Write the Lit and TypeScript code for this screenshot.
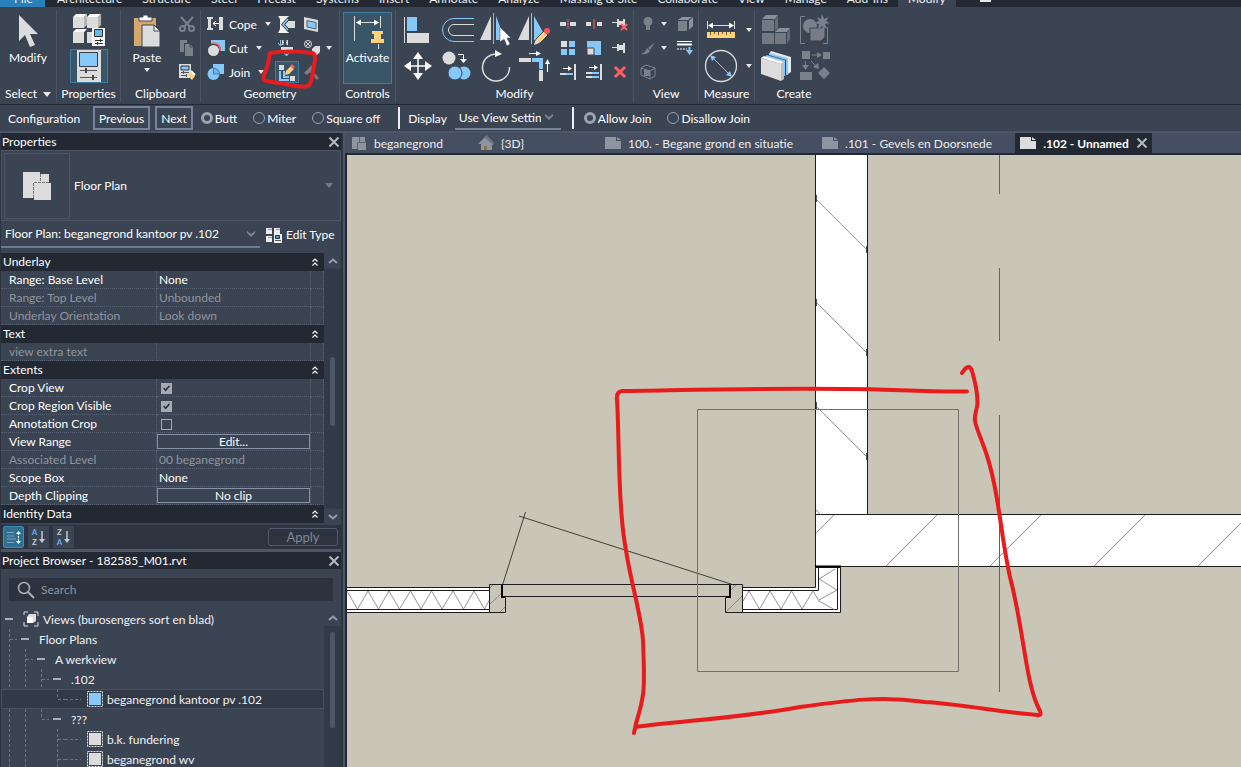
import { LitElement, html, svg, css, nothing, TemplateResult, SVGTemplateResult } from "lit";
import { customElement } from "lit/decorators.js";
import { classMap } from "lit/directives/class-map.js";

const LIGHT = "#dcdcdc";
const BLUE = "#86c8fa";
const DIM = "#7b818b";
const YELLOW = "#ffd27a";
const RED = "#ff5f5f";

const icon = (w: number, h: number, body: SVGTemplateResult) =>
  html`<svg width=${w} height=${h} viewBox="0 0 ${w} ${h}" aria-hidden="true">${body}</svg>`;

const caret = html`<svg class="caret" width="6" height="4" viewBox="0 0 6 4" aria-hidden="true"><path d="M0 0h6L3 4z" fill="#e8e8e8"/></svg>`;
const chevron = html`<svg class="chevron" width="8" height="6" viewBox="0 0 8 6" aria-hidden="true"><path d="M0 0L4 3L8 0V2L4 6L0 2z" fill="#7a8699"/></svg>`;
const cross = html`<svg width="12" height="12" viewBox="0 0 12 12" aria-hidden="true"><path d="M1.500 1.500l9 9M10.500 1.500l-9 9" stroke="#b4b9c1" stroke-width="2"/></svg>`;
const scrollArrow = (up: boolean) =>
  icon(10, 6, svg`<path d=${up ? "M1 5l4-3.500l4 3.500" : "M1 1l4 3.500l4-3.500"} fill="none" stroke="#979da7" stroke-width="2"/>`);

const I = {
  cursor: icon(24, 36, svg`<path d="M3 1V27L9 21L14 33L19 31L14 20H22z" fill=${LIGHT}/>`),
  typeProps: icon(36, 36, svg`
    <g fill=${LIGHT}><path d="M2 5h11v11H2zM16 5h11v11H16zM2 20h11v11H2zM16 20h8v11h-8z"/></g>
    <g fill="#fff"><path d="M2 5l3-3h11l-3 3zM16 5l3-3h11l-3 3zM2 20l3-3h11l-3 3z"/></g>
    <g fill="#b4b4b4"><path d="M13 5l3-3v11l-3 3zM27 5l3-3v11l-3 3z"/></g>
    <path d="M21 16h13v18H21z" fill="#f5f5f5"/><path d="M23.500 17.500h8v7h-8z" fill="#62b8f5" stroke="#333"/>
    <path d="M24 28.500h8M24 31.500h8M29.500 27v3M26.500 30v3" stroke="#333"/>`),
  props: icon(24, 32, svg`<path d="M0 0h24v32H0z" fill=${LIGHT}/><path d="M2.500 2.500h18v14h-18z" fill=${BLUE} stroke="#33404d" stroke-width="1"/>
    <path d="M3 20.500h17M3 27.500h17" stroke="#555"/><path d="M8 18h2v5H8zM15 25h2v5h-2z" fill="#444"/>`),
  paste: icon(28, 34, svg`<path d="M1 4h22v28H1z" fill="#d6a76c"/><path d="M6 3h4V1h5v2h4v4H6z" fill="#fff" stroke="#3b4453"/>
    <path d="M9 11h12l6 6v16H9z" fill=${LIGHT} stroke="#3b4453"/><path d="M21 11v6h6z" fill="#fff" stroke="#3b4453"/>`),
  cut: icon(16, 16, svg`<g fill="none" stroke=${DIM} stroke-width="2"><path d="M2 1l9 10M14 1L5 11"/><circle cx="3.500" cy="12.500" r="2.500"/><circle cx="12.500" cy="12.500" r="2.500"/></g>`),
  copySmall: icon(16, 16, svg`<path d="M1 0h7v3H5v9H1z" fill=${DIM}/><path d="M6 4h5l3 3v9H6z" fill=${DIM}/><path d="M11 4v3h3" fill="none" stroke="#3b4453"/>`),
  match: icon(18, 16, svg`<path d="M1 0h12v14H1z" fill=${LIGHT}/><path d="M3 2h8v4H3z" fill=${BLUE} stroke="#333"/><path d="M3 8.500h8M3 11.500h6M5.500 7v3M8.500 10v3" stroke="#555"/>
    <path d="M10 12l4-4l3 4l-3 4z" fill=${YELLOW}/><path d="M13 7l4 4" stroke="#fff" stroke-width="2"/>`),
  cope: icon(18, 14, svg`<path d="M0 0h6v2H4v9h2v2H0v-2h1V2H0zM12 0h4v13h-4z" fill=${LIGHT}/><path d="M12 6.500H6M9 4L6 6.500L9 9" fill="none" stroke="#fff"/>`),
  cutGeo: icon(18, 18, svg`<path d="M4 1h14v11H4z" fill=${BLUE}/><circle cx="7" cy="11" r="7" fill="#3b4453"/><circle cx="6.500" cy="11.500" r="5.500" fill=${LIGHT}/><path d="M5 4Q14 4 13 12" fill="none" stroke=${RED} stroke-width="1.500"/>`),
  join: icon(18, 18, svg`<path d="M6 1h11v10H6z" fill=${BLUE}/><circle cx="6.500" cy="11" r="6" fill=${BLUE}/><path d="M6.500 5A6 6 0 0 1 12.500 11H6.500z" fill="#6fb5ea" stroke="#3b7fb4"/>`),
  coping: icon(17, 17, svg`<path d="M0 0h11L5 8.500L11 17H0L2 13V3z" fill="#f0f0f0"/><path d="M10 5h7v7h-7L7 8.500z" fill=${LIGHT}/><path d="M11 2L5 8.500l6 6.500" fill="none" stroke="#2f3845" stroke-width="3"/><path d="M10 3L5 8.500L10 14" fill="none" stroke=${BLUE} stroke-width="1.500"/>`),
  face: icon(17, 17, svg`<path d="M1 1l14 3v12L1 13z" fill=${LIGHT}/><path d="M4 4.500l9 2v6.500L4 11z" fill=${BLUE} stroke="#55606f"/>`),
  beam: icon(17, 16, svg`<path d="M4 0h2v5H4zM8 0h2v5H8zM3 7h12v3H3z" fill=${LIGHT}/><path d="M5 1h4M5 4h4" stroke="#3b4453"/><path d="M2.500 0v5M0 3l2.500 3L5 3M8.500 10v5M6 13l2.500 3L11 13" stroke=${BLUE} fill="none"/>`),
  wallOpen: icon(17, 16, svg`<circle cx="5" cy="4" r="3.500" fill="none" stroke=${LIGHT}/><path d="M2.500 1.500l5 5M7.500 1.500l-5 5" stroke=${LIGHT}/><path d="M9 9l3-3h5v6l-3 3H9z" fill=${LIGHT}/>`),
  wallJoin: icon(22, 20, svg`<path d="M3 3h5v5H3z" fill=${LIGHT}/><path d="M14 14h5v5h-5z" fill=${LIGHT}/><path d="M3 9h2v8h8v2H3zM7 9h2v5h4v2H7z" fill=${BLUE}/>
    <path d="M10 9l5-5l3 3l-5 5l-4 1z" fill=${YELLOW}/><path d="M14 4l2-2l3 3l-2 2z" fill=${RED}/>`),
  hammer: icon(17, 17, svg`<path d="M1 9l8-8l2 3L4 11z" fill=${DIM}/><path d="M7 6l8 9" stroke="#8f6e69" stroke-width="3"/>`),
  activate: icon(32, 36, svg`<path d="M2.500 2v25M28.500 2v12M4 8.500h23" stroke=${LIGHT}/><path d="M4 8.500l5-3v6zM27 8.500l-5-3v6z" fill="#fff"/>
    <path d="M20 17h11v3h-2v5h3v4H19v-4h3v-5h-2z" fill=${YELLOW}/><path d="M26.500 30v5" stroke=${LIGHT}/>`),
  align: icon(30, 30, svg`<path d="M1.500 2v26" stroke=${LIGHT}/><path d="M4 2h10v14H4z" fill=${BLUE}/><path d="M4 18h22v10H4z" fill=${LIGHT}/>`),
  offset: icon(34, 28, svg`<path d="M33 2.500H13a11 11 0 0 0 0 23H33" fill="none" stroke=${BLUE}/><path d="M33 8.500H13a5.500 5.500 0 0 0 0 11H33" fill="none" stroke=${LIGHT}/>`),
  mirrorPick: icon(34, 34, svg`<path d="M1 27L12 3v24z" fill=${LIGHT}/><path d="M14.500 0v31" stroke="#5fe07f"/><path d="M17 3v24h9z" fill=${BLUE}/><path d="M21 14v15l4-3l3 7l3-2l-3-6h4z" fill="#fff" stroke="#3b4453" stroke-width=".5"/>`),
  mirrorDraw: icon(34, 34, svg`<path d="M1 27L12 3v24z" fill=${LIGHT}/><path d="M14.500 0v31" stroke=${BLUE}/><path d="M17 3v24h9l1-6z" fill=${BLUE}/><path d="M17 32l2-6L27 18l4 4l-8 8z" fill=${YELLOW} stroke="#3b4453"/><path d="M17 32l2-6l3 4z" fill="#ddd"/><circle cx="30" cy="18" r="3" fill="#ff5357"/>`),
  move: icon(30, 30, svg`<path d="M15 4v22M4 15h22" stroke="#fff" stroke-width="1.500"/><path d="M15 1l5 7H10zM15 29l5-7H10zM1 15l7-5v10zM29 15l-7-5v10z" fill="#fff"/>`),
  copy: icon(32, 32, svg`<circle cx="8" cy="8" r="6.500" fill=${LIGHT}/><circle cx="23" cy="23" r="6.500" fill=${BLUE}/><circle cx="14" cy="23" r="7" fill=${BLUE} stroke="#3b4453"/><path d="M17 4.500h5.500V10" fill="none" stroke="#fff"/><path d="M19 9h7l-3.500 4z" fill="#fff"/>`),
  rotate: icon(34, 32, svg`<path d="M19 4.200A13.500 13.500 0 1 0 30.500 17" fill="none" stroke=${LIGHT} stroke-width="1.500"/><path d="M16 0l7 4l-7 3z" fill="#fff"/>`),
  trim: icon(36, 32, svg`<path d="M2 8h12v4H2z" fill=${LIGHT}/><path d="M15 8h11v11h-4v-7h-7z" fill=${BLUE}/><path d="M22 20h4v11h-4z" fill=${LIGHT}/><path d="M12 3.500h8M30.500 22v-8" stroke="#fff"/><path d="M19 1l5 2.500L19 6zM28 14l2.500-5l2.500 5z" fill="#fff"/>`),
  split: icon(16, 10, svg`<path d="M0 3h6v4H0zM10 3h6v4h-6z" fill=${LIGHT}/><path d="M8 0v10" stroke=${RED}/>`),
  splitGap: icon(16, 10, svg`<path d="M0 3h5v4H0zM11 3h5v4h-5z" fill=${LIGHT}/><path d="M8 0v10" stroke=${RED}/>`),
  unpin: icon(16, 14, svg`<path d="M0 5.500h5" stroke=${LIGHT}/><path d="M5 2h2v2h4V2h2v8h-2V8H7v2H5z" fill=${LIGHT}/><path d="M9 7l6 6M15 7l-6 6" stroke=${RED} stroke-width="2"/>`),
  array: icon(16, 16, svg`<path d="M1 1h6v6H1z" fill=${LIGHT}/><path d="M9 1h6v6H9zM1 9h6v6H1zM9 9h6v6H9z" fill=${BLUE}/>`),
  scale: icon(16, 16, svg`<path d="M1 1h14v14H1z" fill=${BLUE}/><path d="M1 8h7v7H1z" fill=${LIGHT} stroke="#3b4453"/>`),
  pin: icon(16, 12, svg`<path d="M0 5.500h5" stroke=${LIGHT}/><path d="M5 2h2v1h4V1h2v10h-2V8H7v1H5z" fill=${LIGHT}/>`),
  extend: icon(18, 16, svg`<path d="M1 9h6v2H1z" fill=${LIGHT}/><path d="M7 9h7v2H7z" fill=${BLUE}/><path d="M15 0h2v16h-2z" fill=${LIGHT}/><path d="M4 4.500h6" stroke="#fff"/><path d="M9 2l4 2.500L9 7z" fill="#fff"/>`),
  extendMulti: icon(18, 16, svg`<path d="M1 8h6v2H1zM1 12h6v2H1z" fill=${LIGHT}/><path d="M7 8h7v2H7zM7 12h7v2H7z" fill=${BLUE}/><path d="M15 0h2v16h-2z" fill=${LIGHT}/><path d="M4 3.500h6" stroke="#fff"/><path d="M9 1l4 2.500L9 6z" fill="#fff"/>`),
  del: icon(14, 14, svg`<path d="M2 2l10 10M12 2L2 12" stroke=${RED} stroke-width="3"/>`),
  bulb: icon(16, 16, svg`<circle cx="8" cy="5.500" r="4.500" fill=${DIM}/><path d="M6 9h4v5H6z" fill=${DIM}/>`),
  box: icon(16, 16, svg`<path d="M1 5h9v10H1z" fill=${DIM}/><path d="M1 4l4-3h10l-4 3zM12 5l4-4v9l-4 4z" fill="#8d939d"/>`),
  brush: icon(16, 14, svg`<path d="M15 1L8 7l2 2z" fill=${DIM}/><path d="M7 7l3 3Q7 14 1 13Q5 12 7 7z" fill=${DIM}/>`),
  linework: icon(18, 16, svg`<path d="M1 1.500h15" stroke="#fff"/><path d="M1 4.500h15" stroke="#fff" stroke-width="2"/><path d="M1 9h10" stroke="#fff" stroke-dasharray="2 1"/><path d="M13.500 7v5" stroke=${BLUE} stroke-width="2"/><path d="M10 10h7l-3.500 5z" fill=${BLUE}/>`),
  wire: icon(16, 16, svg`<path d="M1 4l5-3l9 3v8l-5 3l-9-4zM1 4l9 3v8M10 7l5-3" fill="none" stroke=${DIM}/><path d="M4 6h6v6H4z" fill=${DIM}/>`),
  dimension: icon(30, 20, svg`<path d="M1.500 1v8M28.500 1v8M3 5.500h24" stroke=${LIGHT}/><path d="M2 5.500l5-3v6zM28 5.500l-5-3v6z" fill="#fff"/><path d="M1 12h28v6H1z" fill=${YELLOW}/><path d="M4.500 12v3M8.500 12v2M12.500 12v3M16.500 12v2M20.500 12v3M24.500 12v2" stroke="#6c5a38"/>`),
  measure: icon(34, 34, svg`<circle cx="17" cy="17" r="15.500" fill="none" stroke=${LIGHT} stroke-width="1.300"/><path d="M8 8l18 18" stroke=${BLUE}/><path d="M6 6l6 2l-4 4zM28 28l-6-2l4-4z" fill=${BLUE}/>`),
  blocks: icon(30, 30, svg`<g fill="#737983"><path d="M1 5h12v11H1zM1 18h12v11H1zM14 18h11v11H14z"/></g><g fill="#898f99"><path d="M1 4l4-4h12l-3 4zM14 17l4-4h11l-3 4z"/></g><path d="M14 5l3-4v12l-3 3zM26 18l3-4v10l-3 5z" fill="#666c76"/>`),
  group: icon(32, 32, svg`<path d="M6 2.500H1.500v27H6M24 29.500h4.500V13" fill="none" stroke=${DIM}/><circle cx="11" cy="12" r="7" fill=${DIM}/><path d="M11 14h11l4-3v12l-4 4H11z" fill="#777d87" stroke="#3b4453"/><path d="M23 0l2 5l5-2l-3 4l4 2l-5 1l2 5l-5-3l-4 4l1-6l-5-1l5-2l-2-4l4 2z" fill=${DIM}/>`),
  assembly: icon(32, 32, svg`<path d="M9 4l2-3l20 6v15l-3 2V10z" fill="#e8e8e8"/><path d="M6 6l18 5v15M9 4l18 5v16" fill="none" stroke=${BLUE} stroke-width="2"/><path d="M1 8l20 6v17L1 24z" fill=${LIGHT}/><path d="M1 8l3-2l20 6l-3 2z" fill="#fff"/><path d="M21 14l3-2v17l-3 2z" fill="#bdbdbd"/>`),
  similar: icon(32, 32, svg`<path d="M3 1h8v8H3zM24 2h7v7h-7zM1 22h12v8H1zM25 17l6 6l-6 6l-6-6z" fill=${DIM}/><path d="M13 5h6M6.500 11v6M12 11l6 6" stroke=${DIM}/><path d="M18 2l5 3l-5 3zM3 15h7l-3.500 5zM20 19l-1-6l-5 4z" fill=${DIM}/>`),
  planThumb: icon(30, 30, svg`<path d="M1 1h17v26H1z" fill=${LIGHT}/><path d="M18 3h9v9h-9z" fill=${LIGHT}/><path d="M12 12h17v17H12z" fill=${LIGHT}/><path d="M18.500 3v8M27 11.500H11.500V28" fill="none" stroke="#777" stroke-dasharray="3 1"/>`),
  editType: icon(18, 16, svg`<path d="M1 1h6v6H1zM9 1h6v6H9zM1 9h6v6H1z" fill="#eee"/><path d="M3 2.500h4M11 2.500h4M3 10.500h4" stroke="#999"/><path d="M9 7h8v9H9z" fill="#eee"/><path d="M10.500 8.500h4v3h-4z" fill="#3f9be0" stroke="#333"/><path d="M10 13.500h6" stroke="#555"/>`),
  tabPlan: icon(16, 14, svg`<path d="M1 1h7v12H1zM9 1h5v5H9zM7 6h8v8H7z" fill="#8e95a1"/><path d="M8.500 1v5M6.500 13V6.500h8" fill="none" stroke="#5a6475"/>`),
  tabHome: icon(16, 16, svg`<path d="M0 9l7-7l9 7l-2 1v5H3V9z" fill="#8e95a1"/><path d="M6 2l3-2l7 8l-2 1z" fill="#6b7483"/><path d="M6 11h3v4H6z" fill="#8b7443"/>`),
  sheet: (c: string) => icon(16, 12, svg`<path d="M0 0h11v4h5v8H0z" fill=${c}/><path d="M12 0l4 3h-4z" fill=${c}/>`),
  views: icon(16, 16, svg`<path d="M1 4V1h4M11 1h4v4M15 11v4h-4M5 15H1v-4" fill="none" stroke=${LIGHT}/><path d="M4 6h6v6H4z" fill="#fff"/><path d="M4 6l2-3h7v7l-3 2V6z" fill=${LIGHT}/>`),
  leaf: (c: string) => icon(16, 16, svg`<path d="M.5 .5h15v15H.5z" fill="none" stroke="#e8e8e8" stroke-dasharray="2 1"/><path d="M2 2h12v12H2z" fill=${c}/>`),
  search: icon(18, 18, svg`<circle cx="7" cy="7" r="5.500" fill="none" stroke="#a9afb8" stroke-width="1.500"/><path d="M11 11l6 6" stroke="#a9afb8" stroke-width="2"/>`),
  double: icon(8, 8, svg`<path d="M1.500 3.500L4 1l2.500 2.500M1.500 7.500L4 5l2.500 2.500" fill="none" stroke="#fff" stroke-width="1.200"/>`),
  sortCat: icon(16, 16, svg`<path d="M1 3.500h7M1 7h7M1 10h9M1 13.500h7" stroke="#7ea5bd"/><path d="M12.500 4v8" stroke="#fff" stroke-dasharray="2 1"/><path d="M10 5l2.500-3L15 5zM10 12l2.500 3L15 12z" fill="#fff"/>`),
  sortArrow: icon(6, 14, svg`<path d="M3 1v10" stroke="#c6cad0" stroke-width="1.500"/><path d="M0 9h6l-3 4z" fill="#c6cad0"/>`),
};

const RIBBON_TABS = ["Architecture", "Structure", "Steel", "Precast", "Systems", "Insert", "Annotate", "Analyze", "Massing & Site", "Collaborate", "View", "Manage", "Add-Ins"];

type Prop = { name: string; value?: string; kind?: "check" | "button" | "text"; on?: boolean; dim?: boolean };
const SECTIONS: { title: string; rows: Prop[] }[] = [
  { title: "Underlay", rows: [
    { name: "Range: Base Level", value: "None" },
    { name: "Range: Top Level", value: "Unbounded", dim: true },
    { name: "Underlay Orientation", value: "Look down", dim: true },
  ] },
  { title: "Text", rows: [{ name: "view extra text", dim: true }] },
  { title: "Extents", rows: [
    { name: "Crop View", kind: "check", on: true },
    { name: "Crop Region Visible", kind: "check", on: true },
    { name: "Annotation Crop", kind: "check" },
    { name: "View Range", kind: "button", value: "Edit..." },
    { name: "Associated Level", value: "00 beganegrond", dim: true },
    { name: "Scope Box", value: "None" },
    { name: "Depth Clipping", kind: "button", value: "No clip" },
  ] },
  { title: "Identity Data", rows: [] },
];

/* guides: v = vertical, t = tee, l = corner, h = horizontal, space = empty */
type Node = { guides: string; toggle?: boolean; pic?: TemplateResult; label: string; selected?: boolean };
const TREE: Node[] = [
  { guides: "", toggle: true, pic: I.views, label: "Views (burosengers sort en blad)" },
  { guides: "t", toggle: true, label: "Floor Plans" },
  { guides: "vt", toggle: true, label: "A werkview" },
  { guides: "vvt", toggle: true, label: ".102" },
  { guides: "   lh", pic: I.leaf(BLUE), label: "beganegrond kantoor pv .102", selected: true },
  { guides: "vvl", toggle: true, label: "???" },
  { guides: "vv th", pic: I.leaf(LIGHT), label: "b.k. fundering" },
  { guides: "vv th", pic: I.leaf(LIGHT), label: "beganegrond wv" },
];
const GUIDE: Record<string, string> = {
  v: "M8.500 0v20", t: "M8.500 0v20M9 10.500h7", l: "M8.500 0v10M9 10.500h7", h: "M0 10.500h16", " ": "",
};

const base = css`
  * { box-sizing: border-box; }
  svg { display: block; flex: none; }
  button, select, input { font: inherit; color: inherit; background: none; border: 0; padding: 0; margin: 0; border-radius: 0; appearance: none; outline: none; }
`;

@customElement("ribbon-bar")
class RibbonBar extends LitElement {
  static styles = [base, css`
    :host { display: block; background: #3b4453; }
    .tabs { display: flex; align-items: flex-end; height: 7px; overflow: hidden; background: #222933; white-space: nowrap; }
    .tab { padding: 0 10px; line-height: 16px; color: #eceef0; text-decoration: none; }
    .file { width: 45px; padding: 0 14px; margin-right: 2px; background: #2a80b9; }
    .on { background: #3b4453; }
    .more { width: 11px; height: 2px; margin: 0 24px 5px; background: #e8e8e8; }
    .groups { display: flex; padding: 3px 0 2px; border-bottom: 1px solid #222933; }
    .group { position: relative; padding-top: 2px; border-right: 1px solid #4a5464; }
    .group:last-child { border-right: 0; }
    .body { display: grid; grid-auto-rows: 24px; height: 72px; align-items: center; justify-items: center; }
    .name { margin: 2px 0 0; font-size: 12px; font-weight: 400; line-height: 16px; text-align: center; display: flex; justify-content: center; align-items: center; gap: 6px; white-space: nowrap; }
    button { display: flex; align-items: center; justify-content: center; gap: 4px; }
    .big { flex-direction: column; justify-content: flex-start; grid-row: span 3; align-self: stretch; line-height: 16px; padding-top: 2px; gap: 2px; }
    .b-select { grid-template-columns: 56px; }
    .b-select .big { gap: 0; }
    .b-properties { grid-template-columns: 63px; grid-auto-rows: 36px; }
    .lit { background: #3a5468; border: 1px solid #3c7ea3; }
    .b-properties .lit { width: 38px; height: 34px; }
    .b-clipboard { grid-template-columns: 52px 27px; grid-auto-flow: column; grid-template-rows: repeat(3, 24px); }
    .b-geometry { grid-template-columns: 72px 28px 38px; }
    .b-geometry button { justify-self: start; }
    .b-geometry .c1 { padding-left: 6px; }
    .b-geometry .c1 .caret { margin-left: 4px; }
    .b-geometry .c2 { padding-left: 5px; }
    .b-geometry .c3 { padding-left: 2px; }
    .b-geometry .c3 .caret { margin-left: 2px; }
    .b-geometry .lit { width: 24px; height: 22px; margin-left: 2px; }
    .b-controls { grid-template-columns: 55px; }
    .b-controls .lit { width: 49px; padding-top: 1px; gap: 0; }
    .b-modify { grid-template-columns: repeat(4, 38px) repeat(3, 26px); grid-template-rows: repeat(6, 12px); padding-left: 7px; }
    .b-modify .tall { grid-row: span 3; justify-self: start; }
    .b-modify .small { grid-row: span 2; }
    .b-view { grid-template-columns: 38px 26px; }
    .b-view .c1 { justify-self: start; padding-left: 6px; gap: 5px; }
    .b-measure { grid-template-columns: 55px; grid-auto-rows: 36px; }
    .b-measure .measure { width: 50px; justify-content: space-between; }
    .b-measure .measure svg:first-child { width: 38px; }
    .b-create { grid-template-columns: 41px 37px; grid-auto-rows: 36px; }
    .mark { position: absolute; left: 58px; top: 38px; overflow: visible; pointer-events: none; }
  `];

  btn(label: string, cls: string, content: unknown) {
    return html`<button class=${cls} aria-label=${label}>${content}</button>`;
  }

  group(id: string, name: unknown, content: unknown, extra: unknown = nothing) {
    return html`<section class="group"><div class="body b-${id}">${content}</div><h2 class="name">${name}</h2>${extra}</section>`;
  }

  render() {
    const b = this.btn;
    return html`
      <nav class="tabs">
        <a class="tab file" href="#">File</a>
        ${RIBBON_TABS.map((t) => html`<a class="tab" href="#">${t}</a>`)}
        <a class="tab on" href="#">Modify</a><span class="more"></span>
      </nav>
      <div class="groups">
        ${this.group("select", html`Select <svg width="8" height="5" viewBox="0 0 8 5"><path d="M0 0h8L4 5z" fill="#e8e8e8"/></svg>`, b("Modify", "big", html`${I.cursor}Modify`))}
        ${this.group("properties", "Properties", [b("Type Properties", "", I.typeProps), b("Properties", "lit", I.props)])}
        ${this.group("clipboard", "Clipboard", [b("Paste", "big", html`${I.paste}<span>Paste</span>${caret}`), b("Cut", "", I.cut), b("Copy", "", I.copySmall), b("Match", "", I.match)])}
        ${this.group("geometry", "Geometry", [
          b("Cope", "c1", html`${I.cope}Cope ${caret}`), b("Beam Joins", "c2", I.coping), b("Split Face", "c3", I.face),
          b("Cut Geometry", "c1", html`${I.cutGeo}Cut ${caret}`), b("Beam Column Joins", "c2", I.beam), b("Wall Opening", "c3", html`${I.wallOpen}${caret}`),
          b("Join Geometry", "c1", html`${I.join}Join ${caret}`), b("Wall Joins", "lit", I.wallJoin), b("Demolish", "c3", I.hammer),
        ], html`<svg class="mark" width="60" height="40" viewBox="259 48 60 40" aria-hidden="true"><path d="M270 53Q288 50 312 53Q317 54 314 65Q312 80 310 84Q308 88 296 86Q280 83 266 81Q261 80 266 70Q269 60 270 53" fill="none" stroke="#e81c1c" stroke-width="4" stroke-linecap="round" stroke-linejoin="round"/></svg>`)}
        ${this.group("controls", "Controls", b("Activate", "big lit", html`${I.activate}Activate`))}
        ${this.group("modify", "Modify", [
          b("Align", "tall", I.align), b("Offset", "tall", I.offset), b("Mirror Pick Axis", "tall", I.mirrorPick), b("Mirror Draw Axis", "tall", I.mirrorDraw),
          b("Split Element", "small", I.split), b("Split with Gap", "small", I.splitGap), b("Unpin", "small", I.unpin),
          b("Array", "small", I.array), b("Scale", "small", I.scale), b("Pin", "small", I.pin),
          b("Move", "tall", I.move), b("Copy", "tall", I.copy), b("Rotate", "tall", I.rotate), b("Trim", "tall", I.trim),
          b("Extend Single", "small", I.extend), b("Extend Multiple", "small", I.extendMulti), b("Delete", "small", I.del),
        ])}
        ${this.group("view", "View", [
          b("Hide", "c1", html`${I.bulb}${caret}`), b("Displace", "", I.box),
          b("Override", "c1", html`${I.brush}${caret}`), b("Linework", "", I.linework), b("Selection Box", "c1", I.wire),
        ])}
        ${this.group("measure", "Measure", [b("Dimension", "measure", html`${I.dimension}${caret}`), b("Measure", "measure", html`${I.measure}${caret}`)])}
        ${this.group("create", "Create", [b("Parts", "", I.blocks), b("Group", "", I.group), b("Assembly", "", I.assembly), b("Create Similar", "", I.similar)])}
      </div>`;
  }
}

@customElement("options-bar")
class OptionsBar extends LitElement {
  static styles = [base, css`
    :host { display: flex; align-items: center; height: 28px; padding: 0 8px; background: #3b4453; border-bottom: 2px solid #4b5768; white-space: nowrap; }
    .box { height: 24px; padding: 0 4px; border: 2px solid #76849b; }
    .config { width: 85px; }
    .next { margin: 0 8px 0 5px; }
    .radio { display: flex; align-items: center; gap: 2px; }
    .radio + .radio { margin-left: 16px; }
    input { width: 12px; height: 12px; border: 1px solid #98a1b0; border-radius: 50%; }
    input:checked { border-width: 3px; border-color: #9aa3b1; }
    .bar { width: 2px; height: 22px; background: #f0f0f0; }
    .b1 { margin: 0 8px 0 18px; }
    .b2 { margin: 0 10px 0 11px; }
    .field { display: flex; align-items: center; gap: 8px; }
    .drop { display: grid; grid-template-columns: 1fr 16px; align-items: center; width: 106px; height: 24px; border-bottom: 2px solid #76849b; }
    .drop select { grid-area: 1 / 1; width: 86px; padding-left: 4px; overflow: hidden; }
    .drop svg { grid-area: 1 / 2; }
  `];
  render() {
    return html`
      <span class="config">Configuration</span>
      <button class="box">Previous</button><button class="box next">Next</button>
      <label class="radio"><input type="radio" name="cfg" checked>Butt</label>
      <label class="radio"><input type="radio" name="cfg">Miter</label>
      <label class="radio"><input type="radio" name="cfg">Square off</label>
      <span class="bar b1"></span>
      <label class="field">Display<span class="drop"><select><option>Use View Settings</option><option>Clean Join</option></select>${chevron}</span></label>
      <span class="bar b2"></span>
      <label class="radio"><input type="radio" name="join" checked>Allow Join</label>
      <label class="radio"><input type="radio" name="join">Disallow Join</label>`;
  }
}

@customElement("properties-palette")
class PropertiesPalette extends LitElement {
  static styles = [base, css`
    :host { display: block; background: #3b4453; }
    .title { display: flex; align-items: center; justify-content: space-between; height: 17px; padding: 0 1px; background: #222933; }
    h2 { margin: 0; font-size: 12px; font-weight: 400; }
    .type { display: flex; align-items: center; width: 100%; height: 71px; padding: 1px 7px 1px 2px; border: 1px solid #4a5566; text-align: left; gap: 4px; }
    .thumb { display: grid; place-items: center; width: 66px; height: 66px; border: 1px solid #4a5566; }
    .type .grow { flex: 1; }
    .instance { display: flex; align-items: flex-start; height: 32px; }
    .drop { display: grid; grid-template-columns: 1fr 13px; align-items: center; width: 259px; height: 27px; border-bottom: 2px solid #6b7a90; margin-right: 5px; }
    .drop select { width: 100%; padding-left: 4px; grid-area: 1 / 1; }
    .edit { display: flex; align-items: center; gap: 3px; height: 27px; white-space: nowrap; }
    .grid { display: flex; height: 272px; overflow: hidden; background: #3b4453; }
    table { flex: 1; border-collapse: separate; border-spacing: 0; table-layout: fixed; align-self: flex-start; }
    .c-name { width: 156px; } .c-end { width: 13px; }
    td, th { height: 18px; padding: 0; font-weight: 400; line-height: 16px; text-align: left; white-space: nowrap; }
    .row td, .row th { border-bottom: 1px dotted #566173; border-right: 1px dotted #566173; }
    .row th { padding-left: 8px; }
    .row td { padding-left: 2px; }
    .row .wide { padding: 0; }
    .row .tick { padding: 2px 0 0 4px; }
    .head th { background: #222933; padding-left: 2px; }
    .head .fold { padding: 0 5px 0 0; }
    .fold svg { margin-left: auto; }
    .dim { color: #8f959e; }
    .wide button { display: block; width: 100%; height: 15px; line-height: 13px; border: 1px solid #8792a5; }
    .check { display: block; width: 11px; height: 11px; border: 1px solid #a5abb6; }
    .check:checked { background: #a5abb6; }
    .check:checked::before { content: ""; display: block; width: 7px; height: 7px; margin: 1px; background: #2c3440; clip-path: polygon(0 50%, 15% 35%, 38% 58%, 85% 5%, 100% 20%, 38% 92%); }
    .scroll { display: flex; flex-direction: column; align-items: center; width: 17px; background: #333a47; }
    .scroll span { display: grid; place-items: center; width: 17px; height: 16px; background: #3b4453; }
    .thumbbar { width: 5px; height: 69px; margin-top: 88px; margin-bottom: auto; border-radius: 3px; background: #4b5666; }
    .foot { display: flex; align-items: center; gap: 4px; height: 24px; padding: 0 3px 0 2px; background: #2d3440; }
    .sort { display: flex; align-items: center; justify-content: center; gap: 2px; width: 21px; height: 22px; background: #3b4453; color: #c6cad0; }
    .sort b { display: grid; font-size: 8px; line-height: 10px; }
    .hi { color: #5fb0ea; }
    .active { background: #2f6f92; border: 1px solid #3f8cb5; border-radius: 2px; }
    .apply { width: 70px; height: 18px; margin-left: auto; border: 1px solid #4f5b6d; border-radius: 3px; color: #7f8792; font-size: 13px; line-height: 14px; }
  `];

  row(p: Prop) {
    const id = p.name.replace(/\W/g, "");
    const cell = p.kind === "check" ? html`<td class="tick"><input class="check" type="checkbox" id=${id} ?checked=${p.on}></td>`
      : p.kind === "button" ? html`<td class="wide"><button id=${id}>${p.value}</button></td>`
      : html`<td>${p.value ?? ""}</td>`;
    return html`<tr class=${classMap({ row: true, dim: !!p.dim })}><th scope="row">${p.kind ? html`<label for=${id}>${p.name}</label>` : p.name}</th>${cell}<td></td></tr>`;
  }

  render() {
    return html`
      <header class="title"><h2>Properties</h2><button aria-label="Close">${cross}</button></header>
      <button class="type"><span class="thumb">${I.planThumb}</span><span class="grow">Floor Plan</span>${icon(8, 5, svg`<path d="M0 0h8L4 5z" fill="#6d7b91"/>`)}</button>
      <div class="instance">
        <div class="drop"><select aria-label="Instance"><option>Floor Plan: beganegrond kantoor pv .102</option></select>${chevron}</div>
        <button class="edit">${I.editType}Edit Type</button>
      </div>
      <div class="grid">
        <table>
          <colgroup><col class="c-name"><col><col class="c-end"></colgroup>
          ${SECTIONS.map((s) => html`<tbody><tr class="head"><th colspan="2" scope="rowgroup">${s.title}</th><th class="fold">${I.double}</th></tr>${s.rows.map((p) => this.row(p))}</tbody>`)}
        </table>
        <div class="scroll"><span>${scrollArrow(true)}</span><div class="thumbbar"></div><span>${scrollArrow(false)}</span></div>
      </div>
      <footer class="foot">
        <button class="sort active" aria-label="Group">${I.sortCat}</button>
        <button class="sort"><b><span class="hi">A</span><span>Z</span></b>${I.sortArrow}</button>
        <button class="sort"><b><span>Z</span><span class="hi">A</span></b>${I.sortArrow}</button>
        <button class="apply">Apply</button>
      </footer>`;
  }
}

@customElement("project-browser")
class ProjectBrowser extends LitElement {
  static styles = [base, css`
    :host { display: flex; flex-direction: column; min-height: 0; background: #3b4453; border-top: 3px solid #4b5768; }
    .title { display: flex; flex: none; align-items: center; justify-content: space-between; height: 17px; padding: 0 1px; background: #222933; }
    h2 { margin: 0; font-size: 12px; font-weight: 400; }
    .search { display: flex; flex: none; align-items: center; gap: 6px; height: 23px; margin: 9px 8px 8px; padding-left: 8px; background: #2c333f; }
    .search input { flex: 1; }
    .search input::placeholder { color: #8f959e; opacity: 1; }
    .body { display: flex; flex: 1; min-height: 0; overflow: hidden; }
    ul { flex: 1; margin: 0; padding: 0; list-style: none; }
    li { display: flex; align-items: center; height: 20px; white-space: nowrap; color: #f0f1f3; }
    .sel { background: #333a47; box-shadow: inset 0 0 0 1px #465263; }
    .toggle { display: grid; place-items: center; width: 16px; height: 20px; }
    .toggle::before { content: ""; width: 8px; height: 2px; background: #a9b0ba; }
    .pic { margin-left: 6px; }
    .text { margin-left: 6px; }
    .pic + .text { margin-left: 4px; }
    .scroll { width: 17px; background: #333a47; }
    .scroll span { display: grid; place-items: center; height: 17px; background: #3b4453; }
    .thumbbar { width: 5px; height: 96px; margin: 6px auto 0; border-radius: 3px; background: #4b5666; }
  `];
  render() {
    return html`
      <header class="title"><h2>Project Browser - 182585_M01.rvt</h2><button aria-label="Close">${cross}</button></header>
      <label class="search">${I.search}<input type="text" placeholder="Search" aria-label="Search"></label>
      <div class="body">
        <ul>${TREE.map((n) => html`<li class=${classMap({ sel: !!n.selected })}>
          ${[...n.guides].map((g) => icon(16, 20, svg`<path d=${GUIDE[g]} stroke="#69727f" stroke-dasharray="3 2" fill="none"/>`))}
          ${n.toggle ? html`<button class="toggle" aria-label="Collapse"></button>` : nothing}
          ${n.pic ? html`<span class="pic">${n.pic}</span>` : nothing}<span class="text">${n.label}</span></li>`)}</ul>
        <div class="scroll"><span>${scrollArrow(true)}</span><div class="thumbbar"></div></div>
      </div>`;
  }
}

@customElement("drawing-view")
class DrawingView extends LitElement {
  static styles = [base, css`
    :host { display: flex; flex-direction: column; min-width: 0; background: #222933; }
    .tabs { display: flex; flex: none; height: 20px; background: #454f61; color: #eceef0; white-space: nowrap; }
    .tab { display: flex; align-items: center; gap: 7px; min-width: 127px; padding: 0 4px 0 6px; color: inherit; text-decoration: none; }
    .slot { width: 12px; }
    .on { background: #222933; font-weight: 700; padding-left: 5px; color: #fff; }
    .canvas { flex: 1; min-height: 0; margin: 2px 0 0 2px; background: #c9c6b7; overflow: hidden; }
    .canvas svg { width: 100%; height: 100%; }
    .wall { fill: #fff; stroke: #1c1c1c; }
    .edge { fill: none; stroke: #1c1c1c; }
    .hatch { fill: none; stroke: #777; stroke-width: .8; }
    .tick { fill: none; stroke: #555; }
    .timber { fill: #c9c6b7; stroke: #1c1c1c; }
    .pen { fill: none; stroke: #e81c1c; stroke-width: 4; stroke-linecap: round; stroke-linejoin: round; }
    .crop { fill: none; stroke: #70706a; }
    .grid { stroke: #8a5a2a; }
    .bold { fill: none; stroke: #000; stroke-width: 2; }
  `];
  tab(pic: unknown, label: string) {
    return html`<a class="tab" href="#">${pic}<span>${label}</span><span class="slot"></span></a>`;
  }
  render() {
    return html`
      <nav class="tabs">
        ${this.tab(I.tabPlan, "beganegrond")}${this.tab(I.tabHome, "{3D}")}
        ${this.tab(I.sheet("#8e95a1"), "100. - Begane grond en situatie")}${this.tab(I.sheet("#8e95a1"), ".101 - Gevels en Doorsnede")}
        <a class="tab on" href="#">${I.sheet(LIGHT)}<span>.102 - Unnamed</span>${cross}</a>
      </nav>
      <div class="canvas"><svg role="img" aria-label="Floor plan detail"><g transform="translate(-347 -155)">
        <path class="wall" d="M815.500 150V515H867.500V150z"/>
        <path class="wall" d="M815.500 514.500H3000V566.500H815.500z"/>
        <path class="hatch" d="M816 199l51 51M816 302l51 51M816 406l51 51M816 510l5 5M816 533l18-18M886 566l51-51M990 566l51-51M1094 566l51-51M1198 566l51-51M1302 566l51-51"/>
        <path class="tick" d="M816.500 195v7M816.500 299v7M816.500 402v7M866.500 246v7M866.500 349v7M866.500 453v7"/>
        <path class="wall" d="M340 587.500H489.500V612.500H340z"/>
        <path class="edge" d="M340 590.500H489M340 609.500H489"/>
        <path class="hatch" d="M347 591l10.500 18l10.500-18l10.500 18l10.500-18l10.500 18l11-18l10.500 18l10.500-18l10.500 18l11-18l10.500 18l10.500-18l10.500 18l5-9"/>
        <path class="wall" d="M742.500 587.500H815.500V567.500H840.500V612.500H742.500z"/>
        <path class="edge" d="M743 590.500H818.500V568M743 609.500H837.500V568"/>
        <path class="hatch" d="M743 601l6-10l10.500 18l10.500-18l11 18l10.500-18l10.500 18l11-18l6 10l16 9M835 569l-16 10l18 11l-18 10"/>
        <path class="bold" d="M815 566.500H841"/>
        <path class="edge" d="M502 584.500H731M502 596.500H731"/>
        <path class="timber" d="M489.500 584.500H502.500V597.500H505.500V612.500H489.500z"/>
        <path class="timber" d="M742.500 584.500H730.500V597.500H725.500V612.500H742.500z"/>
        <path class="hatch" d="M490 604l13-12M500 612l5-5M726 612l16-16M731 590l5-5M490 588l3-3"/>
        <path class="bold" d="M502 585V597H505M730 585V597H726"/>
        <path class="edge" stroke-width=".8" d="M525.500 512L502.500 585M519 516L734 585"/>
        <path class="crop" d="M697.500 409.500H958.500V671.500H697.500z"/>
        <path class="grid" d="M999.500 155V194M999.500 268V341M999.500 415V692"/>
        <path class="pen" d="M967 391.500C920 392 890 389 845 389C760 388 690 390 622 391Q616 392 617 400C619 430 618 475 622 520C626 570 640 605 643 640C645 690 644 695 639 713Q636 722 634 733M636 727C680 721 740 718 800 707C850 700 880 696 925 702C960 704 1000 712 1037 715Q1042 716 1040 711C1026 685 1025 640 1012 585C1001 545 1000 490 984 447C974 420 973 422 977 407C979 395 974 378 972 371Q969 362 962 373"/>
      </g></svg></div>`;
  }
}

@customElement("app-root")
class AppRoot extends LitElement {
  static styles = [base, css`
    :host { display: flex; flex-direction: column; height: 100vh; overflow: hidden; background: #3b4453; color: #fff; font: 12px Lato, "Open Sans", sans-serif; cursor: default; }
    .work { display: grid; grid-template-columns: 345px 1fr; flex: 1; min-height: 0; }
    .side { display: flex; flex-direction: column; min-height: 0; padding: 0 2px 0 1px; border-right: 2px solid #4b5768; background: #2d3440; }
    .side project-browser { flex: 1; }
  `];
  render() {
    return html`
      <ribbon-bar></ribbon-bar>
      <options-bar></options-bar>
      <main class="work">
        <aside class="side"><properties-palette></properties-palette><project-browser></project-browser></aside>
        <drawing-view></drawing-view>
      </main>`;
  }
}
